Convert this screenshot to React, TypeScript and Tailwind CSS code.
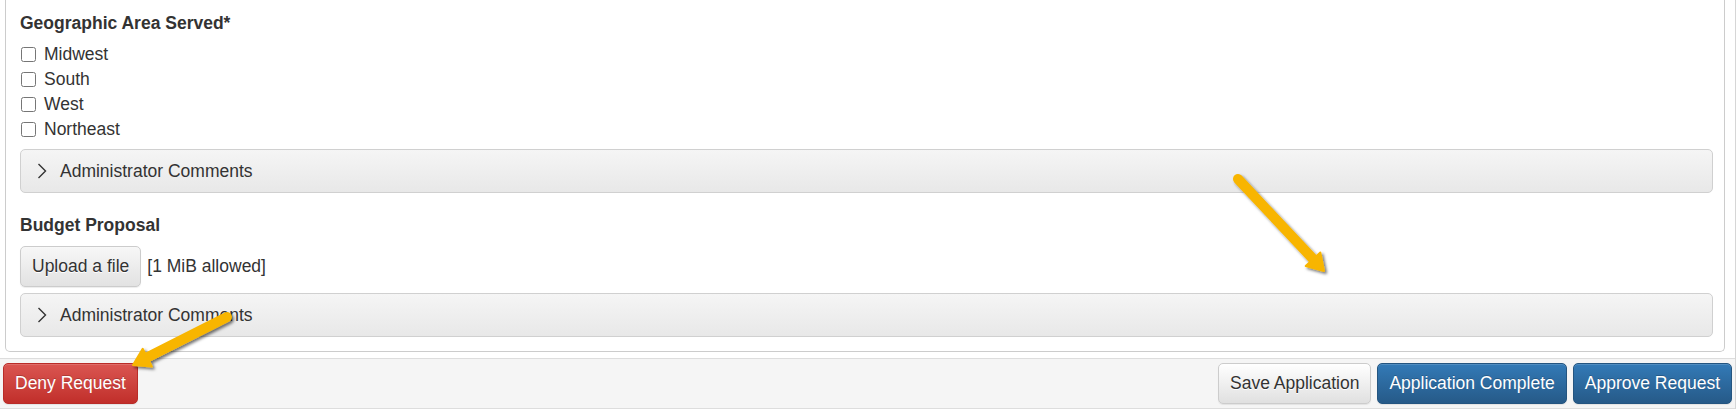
import React from "react";

const Chevron = () => (
  <svg width="10" height="16" viewBox="0 0 10 16" className="shrink-0">
    <path d="M1.5 1 L8.5 8 L1.5 15" fill="none" stroke="#333" strokeWidth="1.4" />
  </svg>
);

const Accordion = ({ className = "" }: { className?: string }) => (
  <div
    className={`h-[44px] flex items-center gap-[13px] pl-[16px] border border-[#d0d0d0] rounded-[5px] bg-linear-to-b from-[#f5f5f5] to-[#e8e8e8] ${className}`}
  >
    <Chevron />
    <span>Administrator Comments</span>
  </div>
);

const CheckRow = ({ label }: { label: string }) => (
  <label className="flex items-center h-[25px] gap-[8px] pl-[1px]">
    <input type="checkbox" className="m-0 w-[15px] h-[15px]" />
    <span>{label}</span>
  </label>
);

const btnBase =
  "h-[41px] px-[11px] border rounded-[5px] text-[17.5px] leading-none flex items-center shadow-[inset_0_1px_0_rgba(255,255,255,0.15),0_1px_1px_rgba(0,0,0,0.075)]";

export default function App() {
  return (
    <div className="relative w-[1736px] h-[412px] bg-white overflow-hidden font-['Liberation_Sans',Arial,sans-serif] text-[#333] text-[17.5px]">
      <div className="border-r border-[#d6d6d6]">
        <div className="pb-[6px]">
          <div className="ml-[5px] mr-[10px] border border-t-0 border-[#cccccc] rounded-b-[5px] pl-[14px] pr-[11px] pt-[11px] pb-[14px]">
            <div className="h-[25px] leading-[25px] font-bold mb-[6px]">Geographic Area Served*</div>
            <CheckRow label="Midwest" />
            <CheckRow label="South" />
            <CheckRow label="West" />
            <CheckRow label="Northeast" />
            <Accordion className="mt-[7px]" />
            <div className="h-[25px] leading-[25px] font-bold mt-[20px]">Budget Proposal</div>
            <div className="flex items-center mt-[8px]">
              <button className="h-[41px] px-[11px] border border-[#cccccc] rounded-[5px] bg-linear-to-b from-[#f7f7f7] to-[#e2e2e2] text-[#333] [text-shadow:0_1px_0_#fff] shadow-[inset_0_1px_0_rgba(255,255,255,0.15),0_1px_1px_rgba(0,0,0,0.075)]">
                Upload a file
              </button>
              <span className="ml-[6px]">[1 MiB allowed]</span>
            </div>
            <Accordion className="mt-[6px]" />
          </div>
        </div>
        <div className="h-[51px] border-t border-b border-[#dddddd] bg-[#f5f5f5] flex items-center justify-between pl-[3px] pr-[3px]">
          <button
            className={`${btnBase} text-white border-[#b92c28] bg-linear-to-b from-[#da5551] to-[#c12e2a] [text-shadow:0_-1px_0_rgba(0,0,0,0.2)]`}
          >
            Deny Request
          </button>
          <div className="flex items-center gap-[6px]">
            <button
              className={`${btnBase} text-[#333] border-[#cccccc] bg-linear-to-b from-white to-[#e0e0e0] [text-shadow:0_1px_0_#fff]`}
            >
              Save Application
            </button>
            <button
              className={`${btnBase} text-white border-[#245580] bg-linear-to-b from-[#337ab7] to-[#265a88] [text-shadow:0_-1px_0_rgba(0,0,0,0.2)]`}
            >
              Application Complete
            </button>
            <button
              className={`${btnBase} text-white border-[#245580] bg-linear-to-b from-[#337ab7] to-[#265a88] [text-shadow:0_-1px_0_rgba(0,0,0,0.2)]`}
            >
              Approve Request
            </button>
          </div>
        </div>
      </div>

      <svg
        className="absolute left-0 top-0 pointer-events-none"
        width="1736"
        height="412"
        viewBox="0 0 1736 412"
      >
        <defs>
          <filter id="sh" x="-20%" y="-20%" width="140%" height="140%">
            <feDropShadow dx="2" dy="2" stdDeviation="1.6" floodColor="#000" floodOpacity="0.55" />
          </filter>
        </defs>
        <g filter="url(#sh)">
          <line x1="1238" y1="179" x2="1314" y2="260" stroke="#f8b500" strokeWidth="10" strokeLinecap="round" />
          <polygon points="1324,271 1305.7,266.1 1320.3,252.5" fill="#f8b500" stroke="#f8b500" strokeWidth="2" strokeLinejoin="round" />
        </g>
        <g filter="url(#sh)">
          <line x1="227" y1="317" x2="146" y2="358" stroke="#f8b500" strokeWidth="10" strokeLinecap="round" />
          <polygon points="133,365 142.7,348.8 151.9,366.6" fill="#f8b500" stroke="#f8b500" strokeWidth="2" strokeLinejoin="round" />
        </g>
      </svg>
    </div>
  );
}
